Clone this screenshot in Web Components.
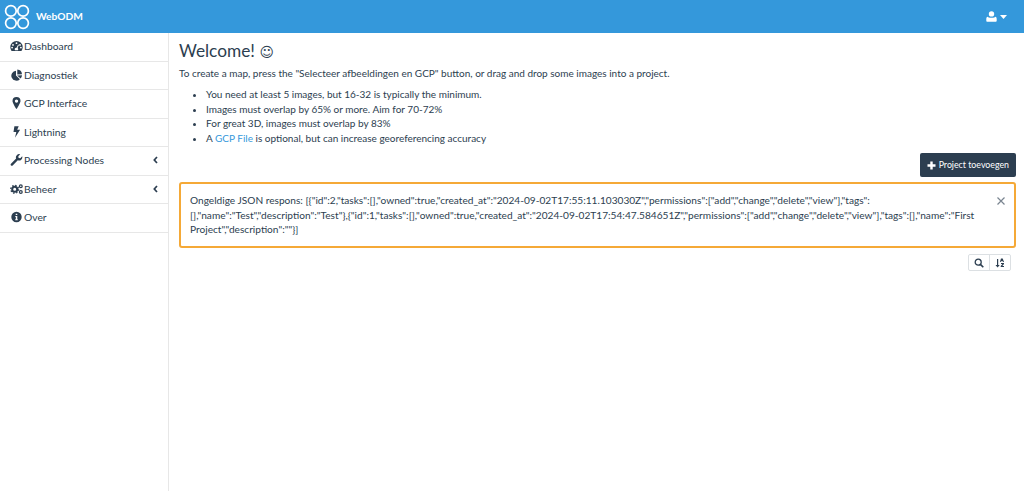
<!DOCTYPE html>
<html>
<head>
<meta charset="utf-8">
<title>WebODM</title>
<style>
  html, body { margin: 0; height: 100%; overflow: hidden; }
  body { font: 10px/14.4px Lato, "Liberation Sans", sans-serif; color: #2c3e50; background: #fff; }
  odm-app { height: 491px; }
</style>
</head>
<body>
<odm-app>
  <odm-navbar slot="top" brand="WebODM"></odm-navbar>
  <odm-sidebar slot="side">
    <odm-nav-item>
      <svg slot="icon" width="13" height="12" viewBox="0 0 13 12"><path fill="#2c3e50" fill-rule="evenodd" d="M6.5 1A6.2 6.2 0 0 0 .3 7.2c0 1.300.4 2.500 1.100 3.500.1.200.3.300.5.300h9.200c.2 0 .4-.1.500-.3.700-1 1.100-2.200 1.100-3.500A6.200 6.200 0 0 0 6.500 1zM6.500 2.300a.9.900 0 1 1 0 1.800.9.900 0 0 1 0-1.800zM3 4a.9.900 0 1 1 0 1.800A.9.900 0 0 1 3 4zM10 4a.9.900 0 1 1 0 1.800A.9.900 0 0 1 10 4zM2.100 6.700a.9.900 0 1 1 0 1.800.9.900 0 0 1 0-1.800zM10.900 6.700a.9.900 0 1 1 0 1.800.9.900 0 0 1 0-1.800zM8.200 4.600l.7.300-1.300 3.200c.4.300.6.700.6 1.100 0 .4-.1.700-.3 1H5.100a1.500 1.500 0 0 1 1.400-2.500z"/></svg>
      Dashboard
    </odm-nav-item>
    <odm-nav-item>
      <svg slot="icon" width="13" height="12" viewBox="0 0 13 12"><path fill="#2c3e50" d="M7.300.6v4.800l4.700-.2A5 5 0 0 0 7.300.6zM6 1.700a5 5 0 1 0 3.900 8.500L6 6.500zM7.100 6.500l3.500 3.100a5 5 0 0 0 1.400-3.300z"/></svg>
      Diagnostiek
    </odm-nav-item>
    <odm-nav-item>
      <svg slot="icon" width="13" height="12" viewBox="0 0 13 12"><path fill="#2c3e50" fill-rule="evenodd" d="M6.500 0a4 4 0 0 0-4 4c0 1.600 2.300 5.500 3.500 7.600.2.400.8.400 1 0C8.200 9.500 10.500 5.600 10.500 4a4 4 0 0 0-4-4zm0 2.400a1.700 1.700 0 1 1 0 3.400 1.700 1.700 0 0 1 0-3.400z"/></svg>
      GCP Interface
    </odm-nav-item>
    <odm-nav-item>
      <svg slot="icon" width="13" height="12" viewBox="0 0 13 12"><path fill="#2c3e50" d="M4.400.3h4.300L7.200 3.700h2.900L5 11.700l1.300-5.600H3.500z"/></svg>
      Lightning
    </odm-nav-item>
    <odm-nav-item sub>
      <svg slot="icon" width="13" height="12" viewBox="0 0 13 12"><path fill="#2c3e50" d="M12.200 2.300 10.300 4.200 8.600 3.900 8.300 2.200 10.200.3A3.300 3.300 0 0 0 6.100 4.600L1 9.700a1.200 1.200 0 0 0 1.700 1.700L7.800 6.300a3.300 3.300 0 0 0 4.400-4z"/></svg>
      Processing Nodes
    </odm-nav-item>
    <odm-nav-item sub>
      <svg slot="icon" width="13" height="12" viewBox="0 0 13 12"><g fill="none" stroke="#2c3e50"><circle cx="4.700" cy="6.300" r="2.500" stroke-width="2"/><circle cx="4.700" cy="6.300" r="3.900" stroke-width="1.300" stroke-dasharray="1.500 1.560"/><circle cx="10.800" cy="3.200" r="1.400" stroke-width="1.200"/><circle cx="10.800" cy="9" r="1.400" stroke-width="1.200"/></g></svg>
      Beheer
    </odm-nav-item>
    <odm-nav-item>
      <svg slot="icon" width="13" height="12" viewBox="0 0 13 12"><path fill="#2c3e50" fill-rule="evenodd" d="M6.500.8a5.200 5.200 0 1 0 0 10.400A5.200 5.200 0 0 0 6.500.8zM5.700 2.700h1.600v1.400H5.700zM5.300 4.900h2v3.300h.5v1H5.200v-1h.6V5.900h-.5z"/></svg>
      Over
    </odm-nav-item>
  </odm-sidebar>
  <odm-main slot="main">
    <odm-welcome></odm-welcome>
    <odm-toolbar>
      <odm-button>
        <svg slot="icon" width="9" height="9" viewBox="0 0 9 9"><path fill="#fff" d="M3.300.5h2.400v2.800h2.800v2.400H5.700v2.800H3.300V5.700H.5V3.300h2.800z"/></svg>
        Project toevoegen
      </odm-button>
    </odm-toolbar>
    <odm-alert>Ongeldige JSON respons: [{"id":2,"tasks":[],"owned":true,"created_at":"2024-09-02T17:55:11.103030Z","permissions":["add","change","delete","view"],"tags":[],"name":"Test","description":"Test"},{"id":1,"tasks":[],"owned":true,"created_at":"2024-09-02T17:54:47.584651Z","permissions":["add","change","delete","view"],"tags":[],"name":"First Project","description":""}]</odm-alert>
    <odm-search-sort></odm-search-sort>
  </odm-main>
</odm-app>

<script>
  // page frame: navbar on top, sidebar and content below
  class OdmApp extends HTMLElement {
    constructor() {
      super();
      this.attachShadow({ mode: 'open' });
      this.shadowRoot.innerHTML = `
        <style>
          :host { display: grid; grid-template-columns: 169px 1fr; grid-template-rows: 33px 1fr; }
          .top { grid-column: 1 / 3; }
        </style>
        <div class="top"><slot name="top"></slot></div>
        <slot name="side"></slot>
        <slot name="main"></slot>
      `;
    }
  }

  class OdmNavbar extends HTMLElement {
    constructor() {
      super();
      this.attachShadow({ mode: 'open' });
      const brand = this.getAttribute('brand') || '';
      this.shadowRoot.innerHTML = `
        <style>
          :host { display: flex; align-items: center; justify-content: space-between; height: 33px; background: #3498db; color: #fff; }
          .brand { display: flex; align-items: center; gap: 6px; padding-left: 4px; font-size: 10.200px; font-weight: 700; }
          .logo { display: block; }
          .user { display: flex; align-items: center; gap: 3px; padding-right: 17px; }
          svg { display: block; }
        </style>
        <div class="brand">
          <svg class="logo" width="26" height="26" viewBox="0 0 26 26" fill="none" stroke="#fff" stroke-width="1.700">
            <circle cx="6.900" cy="6.900" r="5.300"/><circle cx="19.100" cy="6.900" r="5.300"/>
            <circle cx="6.900" cy="19.100" r="5.300"/><circle cx="19.100" cy="19.100" r="5.300"/>
          </svg>
          <span>${brand}</span>
        </div>
        <div class="user">
          <svg width="11" height="11" viewBox="0 0 11 11"><circle cx="5.500" cy="2.900" r="2.700" fill="#fff"/><path fill="#fff" d="M1.600 5.800c.8.700 1.300 1 3.900 1s3.100-.3 3.900-1c.9.300 1.300 1.200 1.300 2.200v1.700c0 .5-.4 1-1 1H1.300c-.6 0-1-.5-1-1V8c0-1 .4-1.900 1.300-2.200z"/></svg>
          <svg width="7" height="4" viewBox="0 0 7 4"><path fill="#fff" d="M0 0h7L3.500 4z"/></svg>
        </div>
      `;
    }
  }

  class OdmSidebar extends HTMLElement {
    constructor() {
      super();
      this.attachShadow({ mode: 'open' });
      this.shadowRoot.innerHTML = `
        <style>
          :host { display: block; box-sizing: border-box; height: 458px; border-right: 1px solid #e7e7e7; font-size: 10.300px; }
        </style>
        <slot></slot>
      `;
    }
  }

  class OdmNavItem extends HTMLElement {
    constructor() {
      super();
      this.attachShadow({ mode: 'open' });
      this.shadowRoot.innerHTML = `
        <style>
          :host { display: flex; align-items: center; box-sizing: border-box; height: 28.500px; padding: 0 10px 1px 10px; border-bottom: 1px solid #e7e7e7; }
          .icon { display: flex; width: 14px; flex: none; }
          .text { flex: 1; }
          .arrow { display: none; }
          :host([sub]) .arrow { display: block; }
        </style>
        <span class="icon"><slot name="icon"></slot></span>
        <span class="text"><slot></slot></span>
        <svg class="arrow" width="5" height="8" viewBox="0 0 5 8"><path fill="none" stroke="#2c3e50" stroke-width="1.700" d="M4 1 1.300 4 4 7"/></svg>
      `;
    }
  }

  class OdmMain extends HTMLElement {
    constructor() {
      super();
      this.attachShadow({ mode: 'open' });
      this.shadowRoot.innerHTML = `
        <style>
          :host { display: block; padding: 0 8px 0 10px; }
        </style>
        <slot></slot>
      `;
    }
  }

  class OdmWelcome extends HTMLElement {
    constructor() {
      super();
      this.attachShadow({ mode: 'open' });
      this.shadowRoot.innerHTML = `
        <style>
          :host { display: block; }
          h3 { margin: 8px 0 0; font-size: 17.300px; line-height: 19px; font-weight: 400; }
          p { margin: 4px 0 0; }
          ul { margin: 7px 0 0; padding-left: 27px; }
          a { color: #3498db; text-decoration: none; }
        </style>
        <h3>Welcome! <span style="font-family: 'DejaVu Sans', sans-serif; font-size: 14px">☺</span></h3>
        <p>To create a map, press the "Selecteer afbeeldingen en GCP" button, or drag and drop some images into a project.</p>
        <ul>
          <li>You need at least 5 images, but 16-32 is typically the minimum.</li>
          <li>Images must overlap by 65% or more. Aim for 70-72%</li>
          <li>For great 3D, images must overlap by 83%</li>
          <li>A <a href="#">GCP File</a> is optional, but can increase georeferencing accuracy</li>
        </ul>
      `;
    }
  }

  class OdmToolbar extends HTMLElement {
    constructor() {
      super();
      this.attachShadow({ mode: 'open' });
      this.shadowRoot.innerHTML = `
        <style>
          :host { display: flex; justify-content: flex-end; margin-top: 8px; }
        </style>
        <slot></slot>
      `;
    }
  }

  class OdmButton extends HTMLElement {
    constructor() {
      super();
      this.attachShadow({ mode: 'open' });
      this.shadowRoot.innerHTML = `
        <style>
          :host { display: flex; align-items: center; gap: 3px; box-sizing: border-box; height: 24px; padding: 0 7px; background: #2c3e50; color: #fff; border-radius: 2px; font-size: 8.800px; }
          .icon { display: flex; }
        </style>
        <span class="icon"><slot name="icon"></slot></span>
        <span><slot></slot></span>
      `;
    }
  }

  class OdmAlert extends HTMLElement {
    constructor() {
      super();
      this.attachShadow({ mode: 'open' });
      this.shadowRoot.innerHTML = `
        <style>
          :host { display: flex; align-items: flex-start; box-sizing: border-box; height: 66px; margin-top: 5px; padding: 9px 9px 0 9px; border: 2px solid #f5a937; border-radius: 3px; font-size: 10.150px; line-height: 14.600px; }
          .msg { flex: 1; }
          .close { flex: none; width: 8px; height: 8px; margin: 4px 0 0 10px; }
          svg { display: block; }
        </style>
        <div class="msg"><slot></slot></div>
        <div class="close"><svg width="8" height="8" viewBox="0 0 8 8"><path fill="none" stroke="#7a8590" stroke-width="1.200" d="M.5.500l7 7M7.500.500l-7 7"/></svg></div>
      `;
    }
  }

  class OdmSearchSort extends HTMLElement {
    constructor() {
      super();
      this.attachShadow({ mode: 'open' });
      this.shadowRoot.innerHTML = `
        <style>
          :host { display: flex; justify-content: flex-end; margin: 6px 5px 0 0; }
          .group { display: flex; box-sizing: border-box; height: 17px; border: 1px solid #dce0e3; border-radius: 2px; }
          .btn { display: flex; align-items: center; justify-content: center; width: 20px; }
          .btn + .btn { border-left: 1px solid #dce0e3; }
          svg { display: block; }
        </style>
        <div class="group">
          <div class="btn"><svg width="10" height="10" viewBox="0 0 10 10"><circle cx="4.200" cy="4.200" r="3" fill="none" stroke="#2c3e50" stroke-width="1.300"/><path stroke="#2c3e50" stroke-width="1.600" d="M6.400 6.400 9.300 9.300"/></svg></div>
          <div class="btn"><svg width="10" height="10" viewBox="0 0 10 10"><path fill="#2c3e50" d="M2 1h1.200v6H4.700L2.600 9.500.5 7H2zM6 .500h1.700L9 4H8L7.800 3.300H6L5.700 4H4.900z"/><path fill="#2c3e50" d="M6 5h3v1L7.300 8H9v1H5.700V8L7.400 6H6z"/></svg></div>
        </div>
      `;
    }
  }

  customElements.define('odm-app', OdmApp);
  customElements.define('odm-navbar', OdmNavbar);
  customElements.define('odm-sidebar', OdmSidebar);
  customElements.define('odm-nav-item', OdmNavItem);
  customElements.define('odm-main', OdmMain);
  customElements.define('odm-welcome', OdmWelcome);
  customElements.define('odm-toolbar', OdmToolbar);
  customElements.define('odm-button', OdmButton);
  customElements.define('odm-alert', OdmAlert);
  customElements.define('odm-search-sort', OdmSearchSort);
</script>
</body>
</html>
